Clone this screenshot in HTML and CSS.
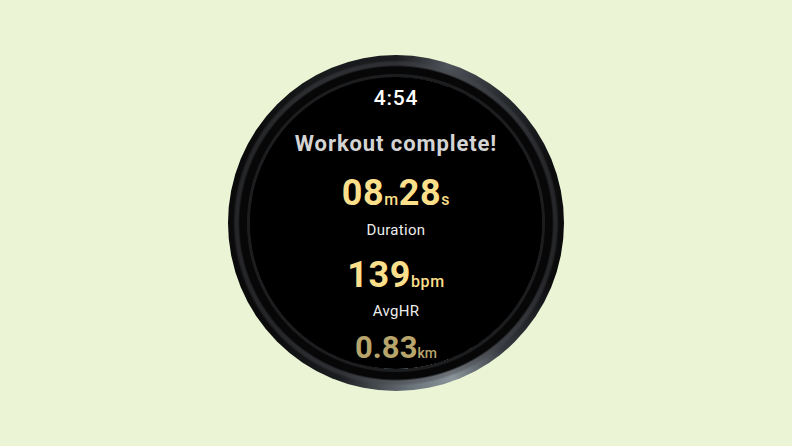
FILE: index.html
```html
<!DOCTYPE html>
<html>
<head>
<meta charset="utf-8">
<link rel="stylesheet" href="styles.css">
</head>
<body>
<div class="stage">
  <div class="watch">
    <div class="screen">
      <div class="time">4:54</div>
      <div class="title">Workout complete!</div>
      <div class="metric">08<span class="unit">m</span>28<span class="unit">s</span></div>
      <div class="label">Duration</div>
      <div class="metric metric-hr">139<span class="unit">bpm</span></div>
      <div class="label label-hr">AvgHR</div>
      <div class="metric metric-dist">0.83<span class="unit">km</span></div>
    </div>
  </div>
</div>
</body>
</html>
```
FILE: styles.css
```css
html, body {
  margin: 0;
  padding: 0;
  background: #ebf5d6;
}
.stage {
  width: 792px;
  height: 446px;
  display: flex;
  align-items: center;
  justify-content: center;
}
.watch {
  width: 336px;
  height: 336px;
  box-sizing: border-box;
  padding: 22px;
  border-radius: 50%;
  background:
    radial-gradient(circle at 50% 50%, transparent 0 146px, #1c1d1f 146px 148.5px, #070708 149.5px 156px, rgba(70,72,76,0.45) 158px 160.5px, transparent 163px),
    conic-gradient(from 0deg,
      #1a1b1e 0deg,
      #4f535a 18deg,
      #272a2e 40deg,
      #0c0c0d 70deg,
      #0a0a0b 110deg,
      #363a40 140deg,
      #8a949b 160deg,
      #6a737a 175deg,
      #1c1d20 200deg,
      #0a0a0b 230deg,
      #0a0a0b 300deg,
      #18191b 330deg,
      #1a1b1e 360deg);
}
.screen {
  width: 292px;
  height: 292px;
  border-radius: 50%;
  background: #000;
  overflow: hidden;
  display: flex;
  flex-direction: column;
  align-items: center;
  font-family: Roboto, "Liberation Sans", sans-serif;
  padding-top: 9px;
  box-sizing: border-box;
}
.time {
  font-size: 21px;
  line-height: 24px;
  font-weight: 500;
  letter-spacing: 0.8px;
  color: #ffffff;
}
.title {
  margin-top: 21px;
  font-size: 22px;
  line-height: 26px;
  font-weight: 700;
  letter-spacing: 0.9px;
  color: #d4d4d4;
}
.metric {
  margin-top: 16px;
  font-size: 36px;
  line-height: 40px;
  font-weight: 700;
  letter-spacing: 0.6px;
  color: #fbdf8b;
}
.unit {
  font-size: 16px;
  line-height: 1;
  font-weight: 500;
  letter-spacing: 0.6px;
}
.label {
  margin-top: 8px;
  font-size: 15px;
  line-height: 18px;
  font-weight: 400;
  letter-spacing: 0.3px;
  color: #ececec;
}
.metric-hr {
  margin-top: 16px;
}
.label-hr {
  margin-top: 7px;
}
.metric-dist {
  margin-top: 10px;
  font-size: 31px;
  line-height: 36px;
  letter-spacing: 0;
  color: #b7a56c;
}
.metric-dist .unit {
  font-size: 14px;
  letter-spacing: 0;
}
```
